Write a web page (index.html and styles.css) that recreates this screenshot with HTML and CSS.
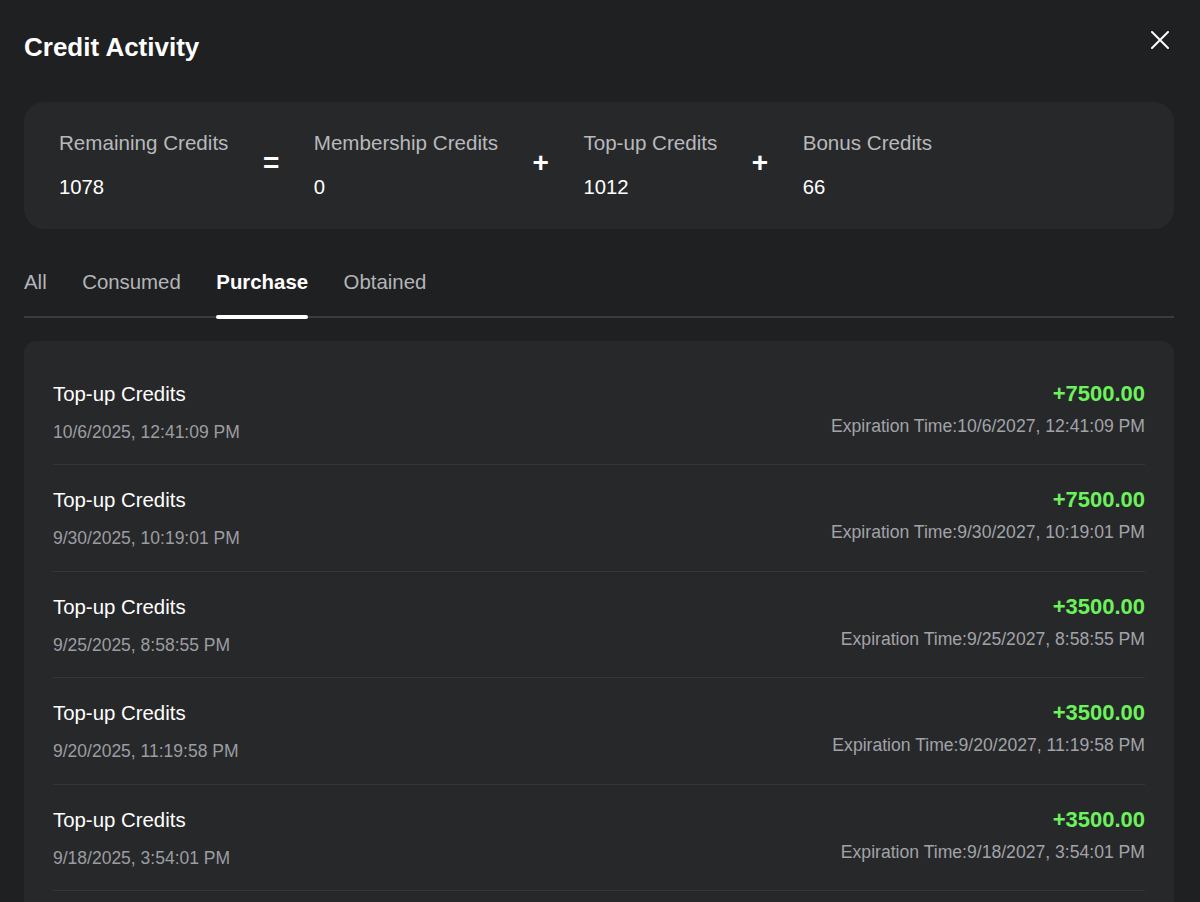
FILE: index.html
```html
<!DOCTYPE html>
<html lang="en">
<head>
    <meta charset="UTF-8">
    <meta name="viewport" content="width=device-width, initial-scale=1.0">
    <title>Credit Activity</title>
    <link rel="stylesheet" href="styles.css">
</head>
<body>
    <div class="modal">
        <div class="modal-header">
            <h1 class="modal-title">Credit Activity</h1>
            <button class="close-button" aria-label="Close">
                <svg width="18" height="18" viewBox="0 0 18 18">
                    <path d="M1 1 L17 17 M17 1 L1 17" stroke="#fff" stroke-width="2" stroke-linecap="round" fill="none"/>
                </svg>
            </button>
        </div>

        <div class="summary">
            <div class="summary-item">
                <div class="summary-label">Remaining Credits</div>
                <div class="summary-value">1078</div>
            </div>
            <div class="summary-op">=</div>
            <div class="summary-item">
                <div class="summary-label">Membership Credits</div>
                <div class="summary-value">0</div>
            </div>
            <div class="summary-op">+</div>
            <div class="summary-item">
                <div class="summary-label">Top-up Credits</div>
                <div class="summary-value">1012</div>
            </div>
            <div class="summary-op">+</div>
            <div class="summary-item">
                <div class="summary-label">Bonus Credits</div>
                <div class="summary-value">66</div>
            </div>
        </div>

        <div class="tabs">
            <div class="tab">All</div>
            <div class="tab">Consumed</div>
            <div class="tab active">Purchase</div>
            <div class="tab">Obtained</div>
        </div>

        <div class="activity-list">
            <div class="activity-row">
                <div class="activity-left">
                    <div class="activity-title">Top-up Credits</div>
                    <div class="activity-date">10/6/2025, 12:41:09 PM</div>
                </div>
                <div class="activity-right">
                    <div class="activity-amount">+7500.00</div>
                    <div class="activity-expire">Expiration Time:10/6/2027, 12:41:09 PM</div>
                </div>
            </div>
            <div class="activity-row">
                <div class="activity-left">
                    <div class="activity-title">Top-up Credits</div>
                    <div class="activity-date">9/30/2025, 10:19:01 PM</div>
                </div>
                <div class="activity-right">
                    <div class="activity-amount">+7500.00</div>
                    <div class="activity-expire">Expiration Time:9/30/2027, 10:19:01 PM</div>
                </div>
            </div>
            <div class="activity-row">
                <div class="activity-left">
                    <div class="activity-title">Top-up Credits</div>
                    <div class="activity-date">9/25/2025, 8:58:55 PM</div>
                </div>
                <div class="activity-right">
                    <div class="activity-amount">+3500.00</div>
                    <div class="activity-expire">Expiration Time:9/25/2027, 8:58:55 PM</div>
                </div>
            </div>
            <div class="activity-row">
                <div class="activity-left">
                    <div class="activity-title">Top-up Credits</div>
                    <div class="activity-date">9/20/2025, 11:19:58 PM</div>
                </div>
                <div class="activity-right">
                    <div class="activity-amount">+3500.00</div>
                    <div class="activity-expire">Expiration Time:9/20/2027, 11:19:58 PM</div>
                </div>
            </div>
            <div class="activity-row">
                <div class="activity-left">
                    <div class="activity-title">Top-up Credits</div>
                    <div class="activity-date">9/18/2025, 3:54:01 PM</div>
                </div>
                <div class="activity-right">
                    <div class="activity-amount">+3500.00</div>
                    <div class="activity-expire">Expiration Time:9/18/2027, 3:54:01 PM</div>
                </div>
            </div>
        </div>
    </div>
</body>
</html>
```

FILE: styles.css
```css
html {
    background-color: #1f2022;
}

body {
    margin: 0;
    font-family: "Liberation Sans", Arial, sans-serif;
    background-color: #1f2022;
    color: #fff;
}

.modal {
    padding: 32px 26px 0 24px;
}

.modal-header {
    display: flex;
    justify-content: space-between;
    align-items: center;
    height: 30px;
}

.modal-title {
    margin: 0;
    font-size: 26px;
    line-height: 30px;
    font-weight: bold;
}

.close-button {
    display: flex;
    align-items: center;
    justify-content: center;
    width: 24px;
    height: 24px;
    padding: 0;
    margin-top: -14px;
    margin-right: 2px;
    background: none;
    border: none;
    cursor: pointer;
}

.summary {
    display: flex;
    align-items: center;
    gap: 34.5px;
    margin-top: 40px;
    padding: 29px 35px 30px;
    background-color: #27282a;
    border-radius: 20px;
}

.summary-label {
    font-size: 20.6px;
    line-height: 24px;
    color: #b8b9bc;
}

.summary-value {
    margin-top: 20px;
    font-size: 20.3px;
    line-height: 24px;
    color: #fff;
}

.summary-op {
    font-size: 28px;
    line-height: 30px;
    font-weight: bold;
    color: #fff;
    margin-top: -4px;
}

.tabs {
    display: flex;
    gap: 35.5px;
    margin-top: 41px;
    border-bottom: 2px solid #3a3b3d;
}

.tab {
    position: relative;
    padding-bottom: 22px;
    font-size: 20.4px;
    line-height: 24px;
    color: #b4b5b8;
    cursor: pointer;
}

.tab.active {
    color: #fff;
    font-weight: bold;
}

.tab.active::after {
    content: "";
    position: absolute;
    left: 0;
    right: 0;
    bottom: -3px;
    height: 4px;
    background-color: #fff;
    border-radius: 2px;
}

.activity-list {
    margin-top: 23px;
    padding: 17.5px 29px 20px;
    background-color: #27282a;
    border-radius: 12px;
}

.activity-row {
    display: flex;
    justify-content: space-between;
    align-items: flex-start;
    padding: 24px 0 21.5px;
    border-bottom: 1px solid #353638;
}

.activity-title {
    font-size: 20.4px;
    line-height: 22px;
    color: #fff;
}

.activity-date {
    margin-top: 16px;
    font-size: 17.5px;
    line-height: 22px;
    color: #9c9da2;
}

.activity-right {
    text-align: right;
}

.activity-amount {
    font-size: 22px;
    line-height: 22px;
    font-weight: bold;
    color: #6cf25a;
}

.activity-expire {
    margin-top: 10px;
    font-size: 17.6px;
    line-height: 22px;
    color: #a2a3a8;
}
```
